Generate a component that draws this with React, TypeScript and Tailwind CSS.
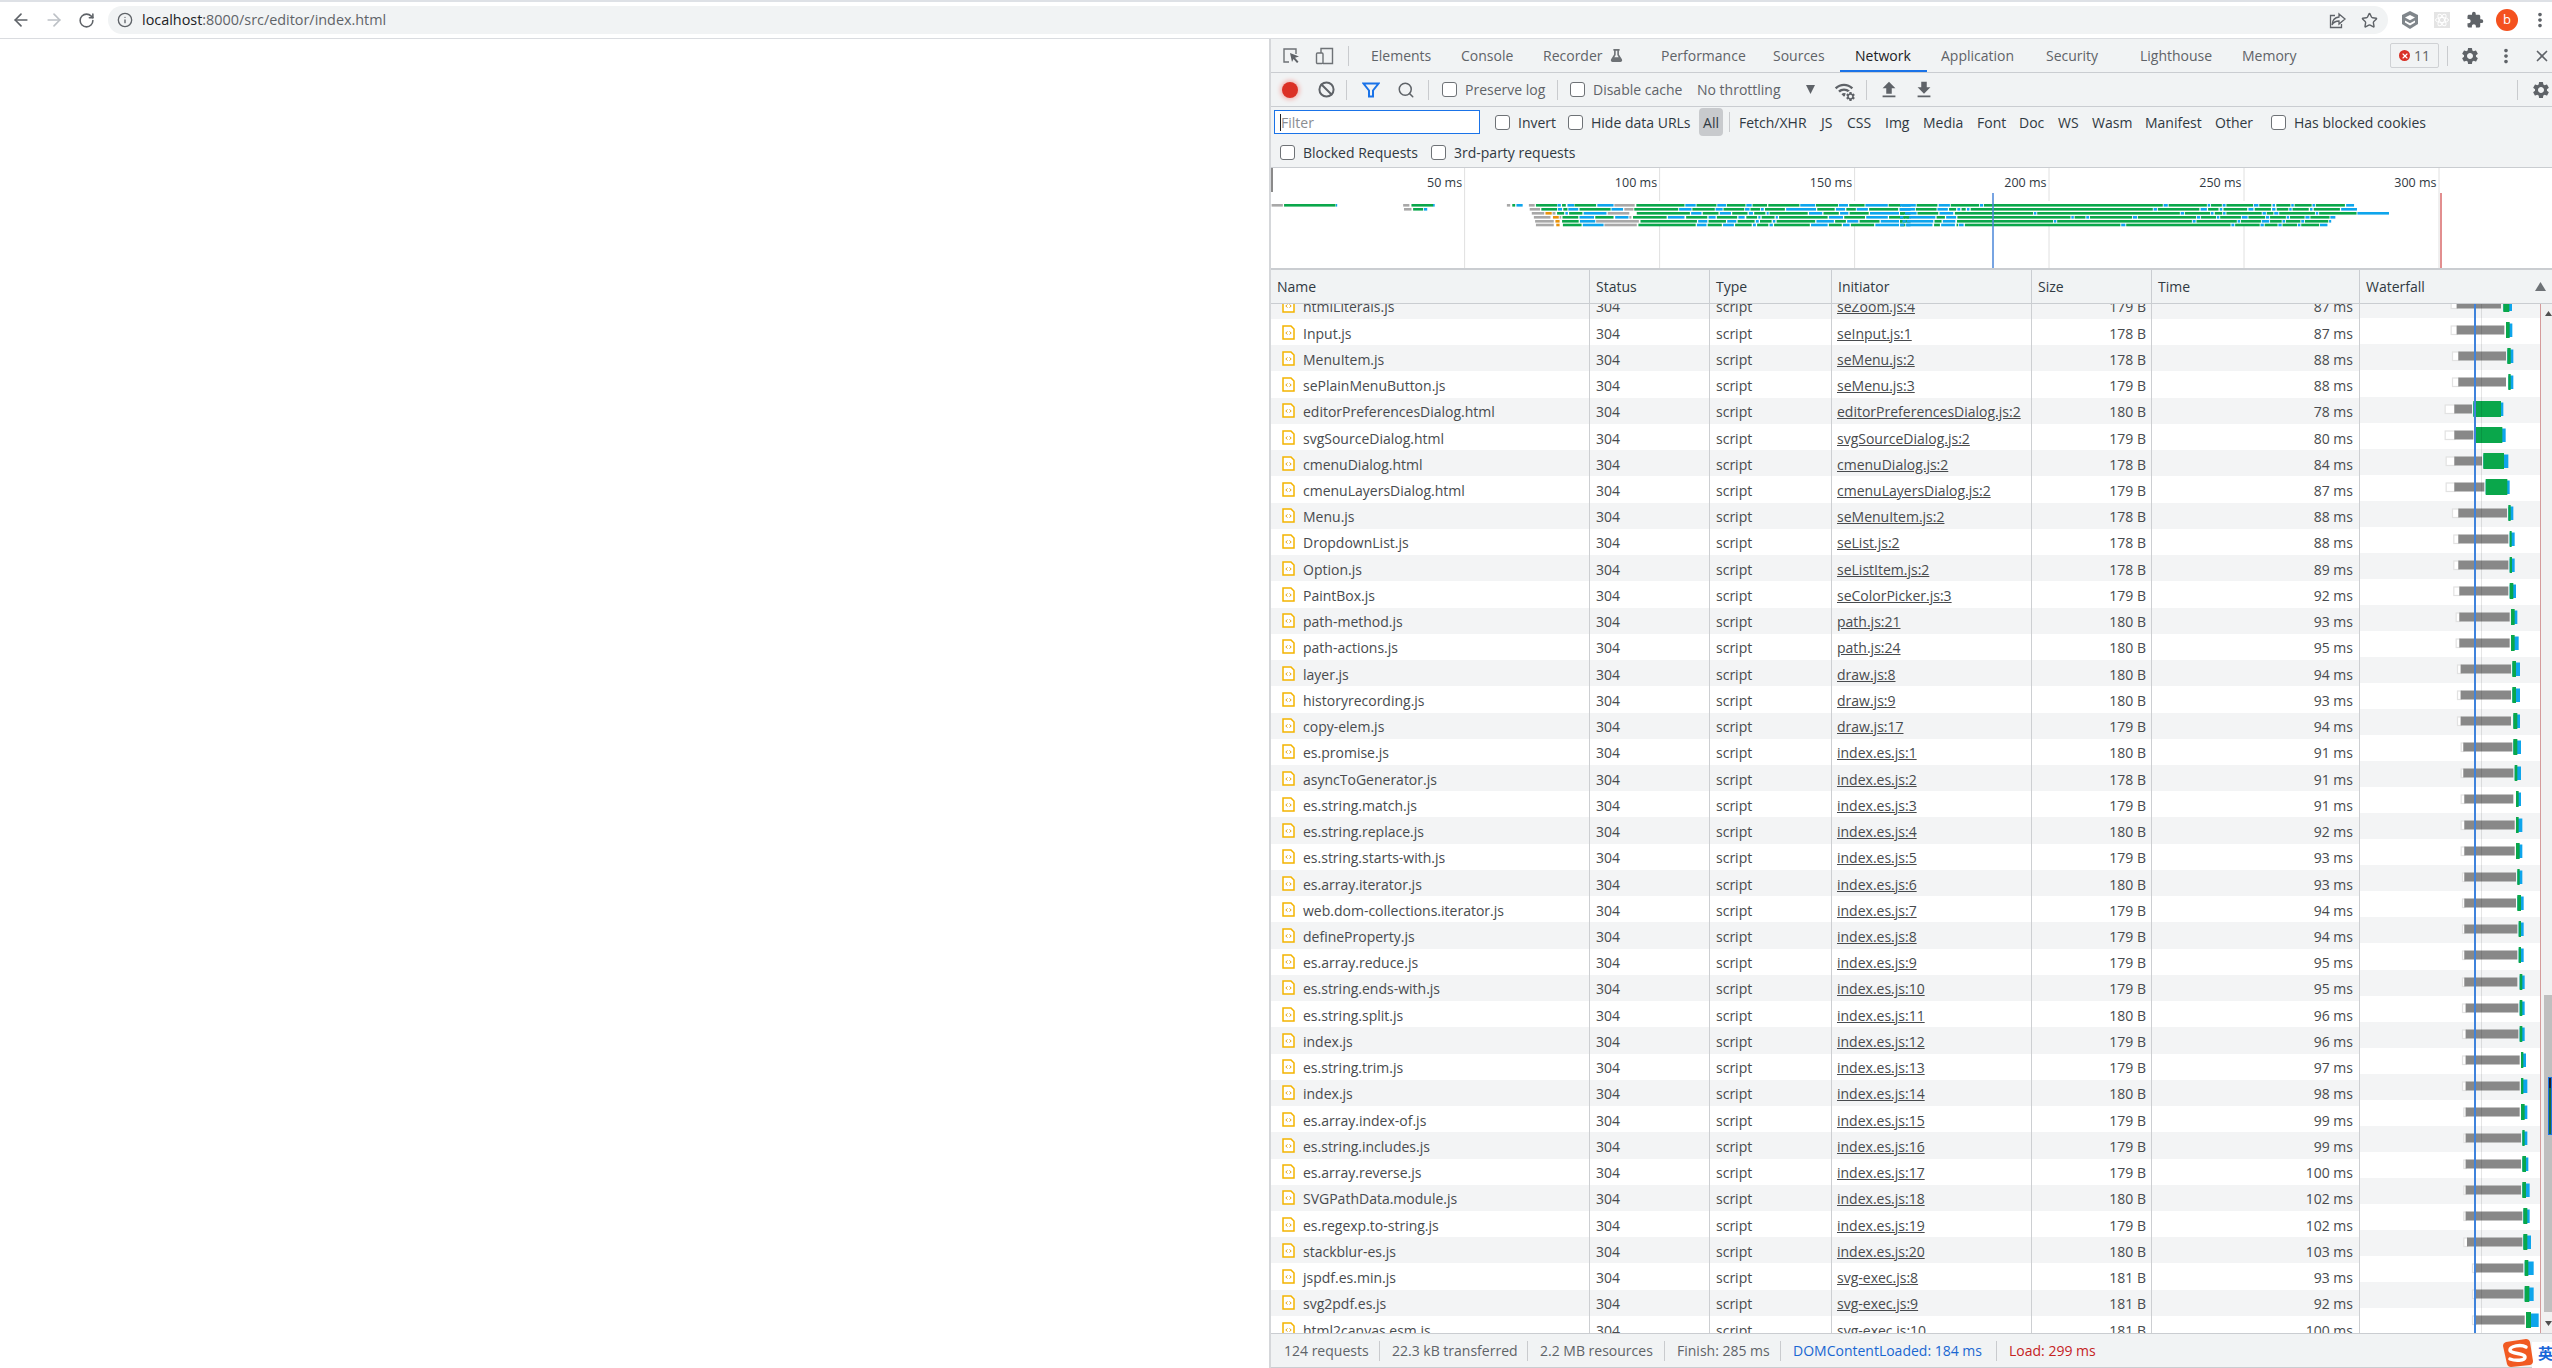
import { ArrowLeft, ArrowRight, RotateCw, Info, Star, Search, Ban, X } from "lucide-react";
import { MdExtension, MdSettings, MdMoreVert, MdFileUpload, MdFileDownload, MdWifi } from "react-icons/md";
import { FaFlask } from "react-icons/fa";

// name, initiator, size, time
const ROWS: [string, string, string, string][] = [
  ["htmlLiterals.js", "seZoom.js:4", "179 B", "87 ms"],
  ["Input.js", "seInput.js:1", "178 B", "87 ms"],
  ["MenuItem.js", "seMenu.js:2", "178 B", "88 ms"],
  ["sePlainMenuButton.js", "seMenu.js:3", "179 B", "88 ms"],
  ["editorPreferencesDialog.html", "editorPreferencesDialog.js:2", "180 B", "78 ms"],
  ["svgSourceDialog.html", "svgSourceDialog.js:2", "179 B", "80 ms"],
  ["cmenuDialog.html", "cmenuDialog.js:2", "178 B", "84 ms"],
  ["cmenuLayersDialog.html", "cmenuLayersDialog.js:2", "179 B", "87 ms"],
  ["Menu.js", "seMenuItem.js:2", "178 B", "88 ms"],
  ["DropdownList.js", "seList.js:2", "178 B", "88 ms"],
  ["Option.js", "seListItem.js:2", "178 B", "89 ms"],
  ["PaintBox.js", "seColorPicker.js:3", "179 B", "92 ms"],
  ["path-method.js", "path.js:21", "180 B", "93 ms"],
  ["path-actions.js", "path.js:24", "180 B", "95 ms"],
  ["layer.js", "draw.js:8", "180 B", "94 ms"],
  ["historyrecording.js", "draw.js:9", "180 B", "93 ms"],
  ["copy-elem.js", "draw.js:17", "179 B", "94 ms"],
  ["es.promise.js", "index.es.js:1", "180 B", "91 ms"],
  ["asyncToGenerator.js", "index.es.js:2", "178 B", "91 ms"],
  ["es.string.match.js", "index.es.js:3", "179 B", "91 ms"],
  ["es.string.replace.js", "index.es.js:4", "180 B", "92 ms"],
  ["es.string.starts-with.js", "index.es.js:5", "179 B", "93 ms"],
  ["es.array.iterator.js", "index.es.js:6", "180 B", "93 ms"],
  ["web.dom-collections.iterator.js", "index.es.js:7", "179 B", "94 ms"],
  ["defineProperty.js", "index.es.js:8", "179 B", "94 ms"],
  ["es.array.reduce.js", "index.es.js:9", "179 B", "95 ms"],
  ["es.string.ends-with.js", "index.es.js:10", "179 B", "95 ms"],
  ["es.string.split.js", "index.es.js:11", "180 B", "96 ms"],
  ["index.js", "index.es.js:12", "179 B", "96 ms"],
  ["es.string.trim.js", "index.es.js:13", "179 B", "97 ms"],
  ["index.js", "index.es.js:14", "180 B", "98 ms"],
  ["es.array.index-of.js", "index.es.js:15", "179 B", "99 ms"],
  ["es.string.includes.js", "index.es.js:16", "179 B", "99 ms"],
  ["es.array.reverse.js", "index.es.js:17", "179 B", "100 ms"],
  ["SVGPathData.module.js", "index.es.js:18", "180 B", "102 ms"],
  ["es.regexp.to-string.js", "index.es.js:19", "179 B", "102 ms"],
  ["stackblur-es.js", "index.es.js:20", "180 B", "103 ms"],
  ["jspdf.es.min.js", "svg-exec.js:8", "181 B", "93 ms"],
  ["svg2pdf.es.js", "svg-exec.js:9", "181 B", "92 ms"],
  ["html2canvas.esm.js", "svg-exec.js:10", "181 B", "100 ms"],
];

// queued start, waiting start, waiting end, download start, green end, blue end
const WATERFALL = [
  [32, 50, 183, 190, 208, 216], [32, 50, 193, 198, 209, 217], [36, 55, 198, 202, 212, 220], [36, 55, 198, 205, 212, 220],
  [14, 43, 96, 100, 183, 190], [14, 43, 100, 107, 187, 197], [17, 43, 126, 130, 192, 205], [17, 43, 133, 137, 202, 209],
  [36, 55, 201, 205, 212, 220], [40, 55, 205, 209, 215, 224], [40, 55, 205, 209, 216, 224], [40, 58, 205, 209, 220, 228],
  [47, 58, 209, 213, 224, 232], [47, 58, 209, 213, 224, 236], [51, 62, 213, 217, 228, 240], [51, 62, 213, 217, 228, 240],
  [51, 62, 213, 220, 232, 240], [62, 70, 217, 220, 232, 243], [62, 70, 220, 224, 232, 243], [62, 73, 220, 228, 236, 243],
  [62, 73, 224, 228, 236, 247], [62, 73, 224, 228, 239, 247], [66, 73, 228, 232, 239, 247], [66, 73, 228, 232, 243, 251],
  [66, 73, 232, 236, 243, 251], [66, 73, 232, 236, 243, 251], [66, 73, 232, 239, 247, 254], [66, 77, 235, 239, 247, 254],
  [66, 77, 235, 239, 247, 254], [66, 77, 239, 243, 250, 258], [66, 77, 239, 243, 250, 262], [70, 77, 239, 243, 254, 262],
  [70, 77, 243, 247, 254, 262], [70, 77, 243, 247, 258, 265], [70, 77, 243, 247, 258, 269], [70, 77, 247, 250, 262, 269],
  [70, 81, 247, 250, 262, 273], [96, 107, 250, 254, 265, 281], [96, 107, 250, 254, 268, 281], [96, 107, 254, 258, 273, 296],
];

const COLOR: Record<string, string> = { g: "#0aa74b", b: "#0ea5ec", x: "#a8a8a8", o: "#e8920c" };

// overview chart segments, two runs per line because they were measured on two crops
const OVERVIEW: [number, string, string][] = [
  [204, "x28-55 g58-182 b183-186 x345-360 g365-417 b417-421 x595-603 g608-615 b618-633 x648-662 g665-716 b717-725 g728-737 b741-757 g758-810 b813-852 x854-903 g907-1023 b1025-1050 g1052-1100 b1102-1123 g1125-1170 b1172-1185 g1187-1222 g1225-1300 b1302-1338 g1340-1393 b1395-1417 g1420-1457 b1459-1513 g1515-1545 b1547-1568",
    "b0-38 g40-90 b93-120 g122-190 b192-200 g202-632 b634-644 g646-738 b740-746 g748-774 b776-783 g785-849 b851-862 g864-893 b896-902 g905-939 b941-947 g949-990 b992-998 g1000-1070 b1073-1092"],
  [208, "x347-365 g369-393 b395-403 x650-675 g678-716 b718-728 g731-741 b743-767 g770-845 b847-875 x878-900 g902-1008 b1010-1040 g1042-1096 b1098-1115 g1117-1167 b1169-1180 g1182-1205 b1207-1214 g1217-1265 b1268-1340 g1343-1385 b1388-1410 g1413-1436 b1438-1465 g1468-1538 b1541-1568",
    "b0-36 g38-88 b90-115 g118-135 b138-145 g148-158 b161-167 g170-608 b610-618 g620-720 b723-738 g741-766 b769-775 g778-835 b838-850 g853-892 b895-903 g906-934 b936-942 g944-983 b986-992 g995-1058 b1061-1099"],
  [212, "x655-685 o688-703 x705-712 g716-733 b736-742 g745-777 b780-835 x838-890 g908-1036 b1039-1064 g1067-1105 b1108-1135 g1138-1175 b1178-1188 g1191-1218 b1221-1226 g1228-1320 b1323-1355 g1358-1395 b1398-1418 g1421-1467 b1470-1540 g1543-1568",
    "g0-10 b12-40 g42-92 b95-128 g132-320 b322-328 g330-673 b675-683 g685-746 b748-754 g757-775 b777-783 g785-870 b872-880 g882-898 b900-910 g912-998 b1000-1006 g1008-1098 b1100-1176"],
  [216, "x660-700 o706-720 x722-726 g729-767 b770-805 g808-852 b856-888 x890-895 g899-980 b983-1023 g1027-1078 b1081-1098 g1101-1150 b1153-1168 g1172-1198 b1201-1206 g1209-1240 b1243-1248 g1251-1368 b1371-1405 g1408-1458 b1461-1513 g1516-1555 b1558-1568",
    "b0-8 g10-22 b24-85 g88-108 b111-135 g138-410 b412-418 g420-446 b448-455 g457-558 b560-570 g572-712 b714-722 g724-760 b762-768 g770-820 b822-836 g838-878 b880-888 g890-928 b930-936 g938-973 b975-985 g987-1033 b1035-1047"],
  [220, "x663-708 o712-722 g728-768 b771-808 x810-913 g917-1053 b1056-1078 g1081-1123 b1126-1148 g1151-1192 b1195-1202 g1205-1233 b1236-1242 g1245-1338 b1341-1383 g1386-1412 b1415-1442 g1445-1493 b1496-1540 g1543-1568",
    "g0-4 b6-14 b16-80 g83-100 b103-133 g137-368 b370-376 g378-702 b704-711 g713-810 b812-818 g820-868 b870-888 g890-918 b920-926 g928-963 b965-972 g974-1030 b1032-1037"],
  [223.7, "x665-708 o714-722 g730-775 b778-828 x830-908 g912-1050 b1053-1076 g1079-1113 b1116-1142 g1145-1185 b1188-1195 g1198-1225 b1228-1236 g1239-1325 b1328-1368 g1371-1402 b1405-1421 g1424-1480 b1483-1540 g1543-1555 b1558-1568",
    "b0-10 b14-78 g82-96 b99-132 g136-140 b142-153 g156-530 b532-542 g544-795 b797-804 g806-865 b867-875 g877-908 b910-918 g920-955 b957-963 g965-1008 b1010-1028"],
];

const TICKS = [1464.6, 1659.6, 1854.6, 2049, 2244, 2439];
const ORIGIN = 1271;

function Bars({ run, y, base, scale }: { run: string; y: number; base: number; scale: number }) {
  return (
    <>
      {run.split(" ").map((seg, i) => {
        const [a, b] = seg.slice(1).split("-").map(Number);
        return (
          <rect
            key={i}
            x={base + a / scale - ORIGIN}
            y={y - 168}
            width={(b - a) / scale}
            height={2.6}
            fill={COLOR[seg[0]]}
          />
        );
      })}
    </>
  );
}

function Overview() {
  return (
    <svg width={1281} height={100} className="block shrink-0 bg-white">
      <rect x={0} y={0} width={2} height={24} fill="#8a8a8a" />
      {TICKS.map((x, i) => (
        <g key={x}>
          <line x1={x - ORIGIN} x2={x - ORIGIN} y1={0} y2={100} stroke="#e0e0e0" />
          <text x={x - ORIGIN - 2.5} y={19} textAnchor="end" fontSize={12.5} fill="#303942">
            {(i + 1) * 50} ms
          </text>
        </g>
      ))}
      <rect x={1560 - ORIGIN} y={33} width={810} height={25} fill="#fff" />
      {OVERVIEW.map(([y, left, right]) => (
        <g key={y}>
          <Bars run={left} y={y} base={1260} scale={2.41} />
          <Bars run={right} y={y} base={1900} scale={2.405} />
        </g>
      ))}
      <line x1={1993 - ORIGIN} x2={1993 - ORIGIN} y1={25} y2={100} stroke="#4a86d8" strokeWidth={1.5} />
      <line x1={2441 - ORIGIN} x2={2441 - ORIGIN} y1={25} y2={100} stroke="#d9686a" strokeWidth={1.5} />
    </svg>
  );
}

function WaterfallBar({ d }: { d: number[] }) {
  const x = (p: number) => 80 + p / 3;
  return (
    <svg width={181} height={26} className="block">
      <rect x={x(d[0]) + 0.5} y={8} width={(d[1] - d[0]) / 3} height={8.5} fill="#fff" stroke="#e2e2e2" strokeWidth={1.2} />
      <rect x={x(d[1])} y={7.5} width={(d[2] - d[1]) / 3} height={9} fill="#888" />
      <rect x={x(d[3])} y={5.5} width={(d[5] - d[3]) / 3} height={13.5} fill="#0ea5ec" />
      <rect x={x(d[3])} y={4} width={(d[4] - d[3]) / 3} height={16} fill="#0aa74b" />
    </svg>
  );
}

function FileIcon() {
  return (
    <svg width={13} height={15} viewBox="0 0 13 15" className="shrink-0">
      <path d="M1 1h8l3 3v10H1z" fill="#fff" stroke="#f4b400" strokeWidth={1.5} />
      <path d="M5.4 6.4 3.8 8l1.6 1.6M7.6 6.4 9.2 8 7.6 9.6" fill="none" stroke="#e8a400" strokeWidth={1} />
    </svg>
  );
}

function Check({ label, className, dark }: { label: string; className: string; dark?: boolean }) {
  return (
    <div className={`flex items-center shrink-0 whitespace-nowrap ${className}`}>
      <span className="w-[15px] h-[15px] shrink-0 rounded-[3px] border border-[#6e7276] bg-white" />
      <span className={`ml-[8px] ${dark ? "text-[#303942]" : "text-[#5f6368]"}`}>{label}</span>
    </div>
  );
}

function Divider({ className }: { className?: string }) {
  return <span className={`w-px h-[20px] shrink-0 bg-[#c9cbce] ${className ?? ""}`} />;
}

const TABS: [string, string][] = [
  ["Elements", "w-[90px]"],
  ["Console", "w-[82px]"],
  ["Recorder", "w-[118px]"],
  ["Performance", "w-[112px]"],
  ["Sources", "w-[82px]"],
  ["Network", "w-[86px]"],
  ["Application", "w-[105px]"],
  ["Security", "w-[94px]"],
  ["Lighthouse", "w-[102px]"],
  ["Memory", "w-[148px]"],
];

const TYPES: [string, string][] = [
  ["Fetch/XHR", "w-[82px]"],
  ["JS", "w-[26px]"],
  ["CSS", "w-[38px]"],
  ["Img", "w-[38px]"],
  ["Media", "w-[54px]"],
  ["Font", "w-[42px]"],
  ["Doc", "w-[39px]"],
  ["WS", "w-[34px]"],
  ["Wasm", "w-[53px]"],
  ["Manifest", "w-[70px]"],
  ["Other", "w-[56px]"],
];

const COLS = {
  name: "w-[319px]",
  status: "w-[120px]",
  type: "w-[122px]",
  initiator: "w-[200px]",
  size: "w-[120px]",
  time: "w-[208px]",
};

function Toolbar() {
  return (
    <div className="flex items-center h-[37px] shrink-0 bg-white border-b border-[#dadce0] text-[#5f6368]">
      <ArrowLeft size={20} strokeWidth={2} className="ml-[11px] shrink-0" />
      <ArrowRight size={20} strokeWidth={2} className="ml-[13px] shrink-0 text-[#bdc1c6]" />
      <RotateCw size={17} strokeWidth={2.2} className="ml-[14px] shrink-0" />
      <div className="ml-[13px] flex items-center w-[2280px] h-[28px] shrink-0 rounded-full bg-[#f1f3f4]">
        <Info size={16} strokeWidth={2} className="ml-[9px] shrink-0" />
        <span className="ml-[9px] text-[14.4px] text-[#5f6368]">
          <span className="text-[#202124]">localhost</span>:8000/src/editor/index.html
        </span>
        <svg width={19} height={19} viewBox="0 0 19 19" fill="none" stroke="#5f6368" strokeWidth={1.3} className="ml-auto shrink-0">
          <path d="M11 3l6 5-6 5v-3C7.5 10 5.5 11 4 14c.3-4.5 3-7.5 7-8z" />
          <path d="M7 4.5H2.5v12h11V13" />
        </svg>
        <Star size={17} strokeWidth={2} className="ml-[14px] mr-[10px] shrink-0" />
      </div>
      <svg width={18} height={20} viewBox="0 0 18 20" className="ml-[13px] shrink-0">
        <path d="M9 1l8 4v9l-8 5-8-5V5z" fill="#80868b" />
        <path d="M9 5l5 2.5-5 2.8-5-2.8zM4 10.5l5 2.8 5-2.8v2L9 15.5l-5-3z" fill="#fff" />
      </svg>
      <svg width={16} height={16} viewBox="0 0 16 16" fill="none" stroke="#fff" className="ml-[15px] shrink-0 bg-[#e4e4e4]">
        <ellipse cx={8} cy={8} rx={6.5} ry={2.5} />
        <ellipse cx={8} cy={8} rx={6.5} ry={2.5} transform="rotate(60 8 8)" />
        <ellipse cx={8} cy={8} rx={6.5} ry={2.5} transform="rotate(120 8 8)" />
      </svg>
      <MdExtension size={18} className="ml-[16px] shrink-0" />
      <span className="ml-[12px] flex items-center justify-center w-[22px] h-[22px] shrink-0 rounded-full bg-[#f4511e] text-white text-[13px]">b</span>
      <MdMoreVert size={22} className="ml-[11px] shrink-0" />
    </div>
  );
}

function TabsRow() {
  return (
    <div className="flex items-center h-[34px] shrink-0 border-b border-[#cacdd1] text-[#5f6368]">
      <svg width={20} height={20} viewBox="0 0 20 20" fill="none" className="ml-[10px] shrink-0">
        <path d="M9 3H3v13h5" stroke="#6e7276" strokeWidth={1.4} />
        <path d="M9 3h6v5" stroke="#6e7276" strokeWidth={1.4} />
        <path d="M9 7l9 3.5-4 1.3 3.5 4-1.5 1.3-3.5-4L11 16z" fill="#5f6368" />
      </svg>
      <svg width={20} height={20} viewBox="0 0 20 20" fill="none" stroke="#6e7276" strokeWidth={1.4} className="ml-[14px] shrink-0">
        <path d="M6 7V2.5h11.5v15H8" />
        <rect x={1.5} y={7} width={6.5} height={10.5} rx={1} />
      </svg>
      <Divider className="ml-[13px]" />
      <div className="flex items-center h-full ml-[22px] text-[14px]">
        {TABS.map(([t, w]) => (
          <span key={t} className={`relative flex items-center h-full shrink-0 ${w} ${t === "Network" ? "text-[#202124]" : ""}`}>
            {t}
            {t === "Recorder" && <FaFlask size={13} className="ml-[7px] text-[#6e7276]" />}
            {t === "Network" && <span className="absolute left-[-15px] bottom-0 w-[87px] h-[2.5px] bg-[#1a73e8]" />}
          </span>
        ))}
      </div>
      <div className="flex items-center w-[49px] h-[25px] shrink-0 rounded-[2px] border border-[#cfd1d4]">
        <span className="ml-[8px] flex items-center justify-center w-[11px] h-[11px] rounded-full bg-[#d93025]">
          <X size={8} strokeWidth={3.5} className="text-white" />
        </span>
        <span className="ml-[4px] text-[14px]">11</span>
      </div>
      <Divider className="ml-[8px]" />
      <MdSettings size={20} className="ml-[12px] shrink-0" />
      <MdMoreVert size={22} className="ml-[15px] shrink-0" />
      <X size={18} strokeWidth={2.2} className="ml-[16px] shrink-0" />
    </div>
  );
}

function ControlsRow() {
  return (
    <div className="flex items-center h-[34px] shrink-0 border-b border-[#cacdd1] text-[14px] text-[#5f6368]">
      <span className="ml-[11px] w-[16px] h-[16px] shrink-0 rounded-full bg-[#db3025] shadow-[0_0_4px_2px_#f2b8b5]" />
      <Ban size={17} strokeWidth={2.8} className="ml-[20px] shrink-0" />
      <Divider className="ml-[11px]" />
      <svg width={18} height={16} viewBox="0 0 18 16" fill="none" stroke="#1a73e8" strokeWidth={2} className="ml-[15px] shrink-0">
        <path d="M1.5 1.5h15L11 8.5V14.5H7V8.5z" />
      </svg>
      <Search size={18} strokeWidth={2} className="ml-[17px] shrink-0" />
      <Divider className="ml-[13px]" />
      <Check label="Preserve log" className="ml-[13px] w-[115px]" />
      <Divider />
      <Check label="Disable cache" className="ml-[12px] w-[127px]" />
      <span className="w-[108px] shrink-0">No throttling</span>
      <svg width={12} height={9} viewBox="0 0 12 9" className="shrink-0">
        <path d="M1 0h9L5.5 9z" fill="#5f6368" />
      </svg>
      <div className="relative ml-[17px] w-[20px] shrink-0">
        <MdWifi size={20} className="block" />
        <MdSettings size={11} className="absolute right-[-2px] bottom-[-2px] bg-[#f1f3f4] rounded-full" />
      </div>
      <Divider className="ml-[12px]" />
      <MdFileUpload size={22} className="ml-[11px] shrink-0" />
      <MdFileDownload size={22} className="ml-[13px] shrink-0" />
      <Divider className="ml-auto" />
      <MdSettings size={20} className="ml-[13px] mr-[1px] shrink-0" />
    </div>
  );
}

function FilterRows() {
  return (
    <div className="h-[61px] shrink-0 border-b border-[#cacdd1] text-[14px]">
      <div className="flex items-center h-[30px]">
        <div className="ml-[3px] flex items-center w-[206px] h-[24px] shrink-0 border border-[#1a73e8] bg-white text-[#8a8d91]">
          <span className="ml-[5px] w-px h-[17px] bg-[#202124]" />
          <span>Filter</span>
        </div>
        <Check dark label="Invert" className="ml-[15px] w-[73px]" />
        <Check dark label="Hide data URLs" className="w-[131px]" />
        <span className="flex items-center justify-center w-[24px] h-[28px] shrink-0 rounded-[4px] bg-[#c8cacd] text-[#303942]">All</span>
        <Divider className="ml-[6px]" />
        <div className="flex items-center ml-[9px] text-[#303942]">
          {TYPES.map(([t, w]) => (
            <span key={t} className={`shrink-0 ${w}`}>{t}</span>
          ))}
        </div>
        <Check dark label="Has blocked cookies" className="" />
      </div>
      <div className="flex items-center h-[30px]">
        <Check dark label="Blocked Requests" className="ml-[9px] w-[151px]" />
        <Check dark label="3rd-party requests" className="" />
      </div>
    </div>
  );
}

function TableHeader() {
  return (
    <div className="flex items-center h-[36px] shrink-0 border-t-2 border-b border-[#cacdd1] text-[14px] text-[#303942]">
      {[["Name", COLS.name], ["Status", COLS.status], ["Type", COLS.type], ["Initiator", COLS.initiator], ["Size", COLS.size], ["Time", COLS.time]].map(([t, w]) => (
        <span key={t} className={`flex items-center h-full shrink-0 pl-[6px] border-r border-[#cacdd1] ${w}`}>{t}</span>
      ))}
      <span className="pl-[6px] flex-1">Waterfall</span>
      <svg width={11} height={9} viewBox="0 0 11 9" className="mr-[6px] shrink-0">
        <path d="M5.5 0 11 9H0z" fill="#6e7276" />
      </svg>
    </div>
  );
}

function Table() {
  return (
    <div className="flex flex-1 min-h-0 bg-white">
      <div className="relative flex w-[1270px] shrink-0 overflow-hidden">
        {/* the text rows and the waterfall canvas have slightly different row heights */}
        <div className="w-[1089px] shrink-0 mt-[-11.24px]">
          {ROWS.map((r, i) => (
            <div key={i} className={`flex items-center h-[26.24px] text-[14px] text-[#484b4e] ${i % 2 === 0 ? "bg-[#f3f4f5]" : "bg-white"}`}>
              <div className={`flex items-center h-full shrink-0 pl-[11px] border-r border-[#cdcfd2] ${COLS.name}`}>
                <FileIcon />
                <span className="ml-[8px] pt-[2px] whitespace-nowrap">{r[0]}</span>
              </div>
              <div className={`flex items-center h-full shrink-0 pl-[6px] pt-[2px] border-r border-[#cdcfd2] ${COLS.status}`}>304</div>
              <div className={`flex items-center h-full shrink-0 pl-[6px] pt-[2px] border-r border-[#cdcfd2] ${COLS.type}`}>script</div>
              <div className={`flex items-center h-full shrink-0 pl-[5px] pt-[2px] border-r border-[#cdcfd2] ${COLS.initiator}`}>
                <span className="underline whitespace-nowrap">{r[1]}</span>
              </div>
              <div className={`flex items-center justify-end h-full shrink-0 pr-[5px] pt-[2px] border-r border-[#cdcfd2] ${COLS.size}`}>{r[2]}</div>
              <div className={`flex items-center justify-end h-full shrink-0 pr-[6px] pt-[2px] border-r border-[#cdcfd2] ${COLS.time}`}>{r[3]}</div>
            </div>
          ))}
        </div>
        <div className="w-[181px] shrink-0 mt-[-11.7px]">
          {WATERFALL.map((d, i) => (
            <div key={i} className={`h-[26.05px] ${i % 2 === 0 ? "bg-[#f3f4f5]" : "bg-white"}`}>
              <WaterfallBar d={d} />
            </div>
          ))}
        </div>
        <span className="absolute top-0 bottom-0 left-[1210px] w-px bg-[#000]/10" />
        <span className="absolute top-0 bottom-0 left-[1203px] w-[1.5px] bg-[#3f83dc]" />
        <span className="absolute top-0 bottom-0 right-0 w-px bg-[#d59a9a]" />
      </div>
      <div className="relative flex-1 bg-[#f1f1f1]">
        <svg width={7} height={5} viewBox="0 0 7 5" className="absolute right-[0px] top-[7px]">
          <path d="M3.5 0 7 5H0z" fill="#505050" />
        </svg>
        <div className="absolute left-[3px] right-0 top-[691px] h-[317px] bg-[#bfbfbf]" />
        <div className="absolute right-0 top-[773px] w-[4px] h-[58px] border border-[#1a73e8] bg-[#1f6b3c]">
          <div className="h-[10px] bg-[#222]" />
        </div>
        <svg width={7} height={5} viewBox="0 0 7 5" className="absolute right-[0px] bottom-[7px]">
          <path d="M0 0h7L3.5 5z" fill="#505050" />
        </svg>
      </div>
    </div>
  );
}

const STATUS: [string, string][] = [
  ["124 requests", "w-[108px]"],
  ["22.3 kB transferred", "w-[148px]"],
  ["2.2 MB resources", "w-[137px]"],
  ["Finish: 285 ms", "w-[116px]"],
  ["DOMContentLoaded: 184 ms", "w-[216px] text-[#1967d2]"],
  ["Load: 299 ms", "text-[#c5221f]"],
];

function StatusBar() {
  return (
    <div className="relative flex items-center h-[35px] shrink-0 border-t border-b border-[#cacdd1] pl-[13px] text-[14px] text-[#5f6368]">
      {STATUS.map(([t, cls], i) => (
        <div key={t} className={`flex items-center shrink-0 ${cls}`}>
          <span className="whitespace-nowrap flex-1">{t}</span>
          {i < STATUS.length - 1 && <span className="w-px h-[20px] mr-[12px] bg-[#c9cbce]" />}
        </div>
      ))}
      {/* IME badge floats over the bar */}
      <div className="absolute left-[1261px] top-[8px] w-[22px] h-[26px] bg-white text-[#1a66d8] font-bold text-[15px] font-['Noto_Sans_CJK_SC',sans-serif] pl-[6px] overflow-hidden whitespace-nowrap">英</div>
      <svg width={32} height={30} viewBox="0 0 32 30" className="absolute left-[1231px] top-[4px]">
        <path d="M4 4l20-3q3 0 4 3l3 19q0 3-3 4L9 29q-3 0-4-3L1 8q0-3 3-4z" fill="#f15a22" />
        <path d="M24 9C19 6 8 8 8 12c0 4 15 3 15 7 0 4-10 4-15 2" fill="none" stroke="#fff" strokeWidth={3.5} strokeLinecap="round" />
      </svg>
    </div>
  );
}

export default function App() {
  return (
    <div className="w-[2552px] h-[1368px] overflow-hidden flex flex-col bg-white font-['Open_Sans',sans-serif]">
      <div className="h-[2px] shrink-0 bg-[#dee1e6]" />
      <Toolbar />
      <div className="flex flex-1 min-h-0">
        <div className="w-[1269px] shrink-0 bg-white" />
        <div className="flex flex-col w-[1283px] shrink-0 border-l-2 border-[#d5d7da] bg-[#f1f3f4]">
          <TabsRow />
          <ControlsRow />
          <FilterRows />
          <Overview />
          <TableHeader />
          <Table />
          <StatusBar />
        </div>
      </div>
    </div>
  );
}
